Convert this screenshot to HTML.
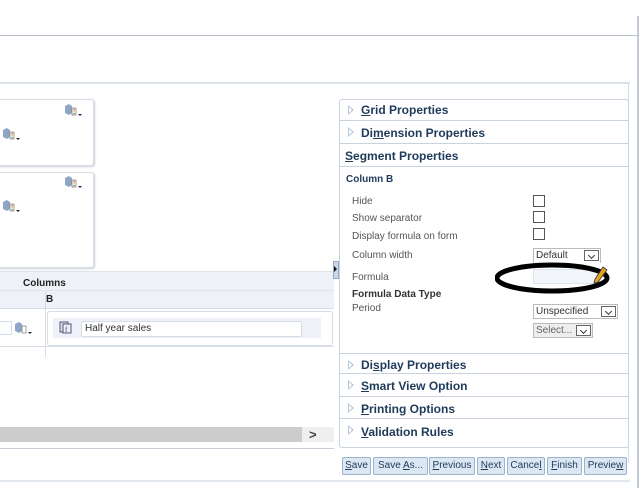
<!DOCTYPE html>
<html><head><style>
*{margin:0;padding:0;box-sizing:border-box}
body{width:640px;height:488px;background:#fff;position:relative;overflow:hidden;font-family:"Liberation Sans",Arial,sans-serif;font-size:10px;color:#333}
.a{position:absolute}
.hd{font-weight:bold;color:#1f3a5a;font-size:12px}
.row{position:absolute;left:340px;width:288px;border-bottom:1px solid #c9d3de}
.tri{position:absolute;left:8px;top:6px;width:0;height:0;border-left:6px solid #b8c8dc;border-top:5px solid transparent;border-bottom:5px solid transparent}
.tri:after{content:"";position:absolute;left:-5px;top:-3px;border-left:3px solid #fff;border-top:3px solid transparent;border-bottom:3px solid transparent}
.cb{position:absolute;left:533px;width:12px;height:12px;border:1px solid #555;background:#fff}
.lbl{position:absolute;left:352px;color:#555;font-size:10px}
.sel{position:absolute;border:1px solid #bbb;background:#fff;font-size:10px;color:#333;padding:1px 2px;height:15px}
.dd{position:absolute;right:1px;top:1px;width:15px;height:11px;border:1px solid #666;background:#fff}
.dd:after{content:"";position:absolute;left:4px;top:2px;width:4px;height:4px;border-right:1px solid #333;border-bottom:1px solid #333;transform:rotate(45deg)}
.btn{position:absolute;top:457px;height:18px;border:1px solid #9bb3cc;background:#dbe7f3;border-radius:2px;font-size:10px;color:#1f3a5a;text-align:center;line-height:16px}
.box{position:absolute;left:-4px;width:98px;background:#fff;border:1px solid #d6dde5;border-radius:3px;box-shadow:1px 1px 2px #ccd}
</style></head><body>
<div class="a" style="left:0;top:35px;width:638px;height:1px;background:#b8c2cc"></div>
<div class="a" style="left:637px;top:16px;width:2px;height:472px;background:#c3ccd6"></div>
<div class="a" style="left:0;top:82px;width:630px;height:2px;background:#dde3ea"></div>
<div class="a" style="left:628px;top:83px;width:1px;height:380px;background:#d6dde5"></div>

<div class="box" style="top:99px;height:67px"></div>
<div class="box" style="top:172px;height:96px"></div>
<svg class="a" style="left:64px;top:104px" width="20" height="14"><path d="M1 2l4-2 3 2v7l-3 2-4-2z" fill="#8ea6c6"/><rect x="8" y="4" width="4" height="7" fill="#fff" stroke="#777" stroke-width=".7"/><rect x="9.5" y="5" width="1.3" height="1.3" fill="#d33"/><rect x="9.5" y="7" width="1.3" height="1.3" fill="#eb0"/><rect x="9.5" y="9" width="1.3" height="1.3" fill="#2a2"/><path d="M14 10h4l-2 2z" fill="#223"/></svg>
<svg class="a" style="left:2px;top:128px" width="20" height="14"><path d="M1 2l4-2 3 2v7l-3 2-4-2z" fill="#8ea6c6"/><rect x="8" y="4" width="4" height="7" fill="#fff" stroke="#777" stroke-width=".7"/><rect x="9.5" y="5" width="1.3" height="1.3" fill="#d33"/><rect x="9.5" y="7" width="1.3" height="1.3" fill="#eb0"/><rect x="9.5" y="9" width="1.3" height="1.3" fill="#2a2"/><path d="M14 10h4l-2 2z" fill="#223"/></svg>
<svg class="a" style="left:64px;top:176px" width="20" height="14"><path d="M1 2l4-2 3 2v7l-3 2-4-2z" fill="#8ea6c6"/><rect x="8" y="4" width="4" height="7" fill="#fff" stroke="#777" stroke-width=".7"/><rect x="9.5" y="5" width="1.3" height="1.3" fill="#d33"/><rect x="9.5" y="7" width="1.3" height="1.3" fill="#eb0"/><rect x="9.5" y="9" width="1.3" height="1.3" fill="#2a2"/><path d="M14 10h4l-2 2z" fill="#223"/></svg>
<svg class="a" style="left:2px;top:200px" width="20" height="14"><path d="M1 2l4-2 3 2v7l-3 2-4-2z" fill="#8ea6c6"/><rect x="8" y="4" width="4" height="7" fill="#fff" stroke="#777" stroke-width=".7"/><rect x="9.5" y="5" width="1.3" height="1.3" fill="#d33"/><rect x="9.5" y="7" width="1.3" height="1.3" fill="#eb0"/><rect x="9.5" y="9" width="1.3" height="1.3" fill="#2a2"/><path d="M14 10h4l-2 2z" fill="#223"/></svg>

<div class="a" style="left:0;top:271px;width:334px;height:20px;background:#eef2f8;border-top:1px solid #dde4ec;border-bottom:1px solid #dde4ec"></div>
<div class="a" style="left:23px;top:278px;font-weight:bold;font-size:10px;color:#222">Columns</div>
<div class="a" style="left:0;top:291px;width:334px;height:18px;background:#eef2f8;border-bottom:1px solid #d6dde5"></div>
<div class="a" style="left:46px;top:294px;font-weight:bold;font-size:10px;color:#222">B</div>
<div class="a" style="left:45px;top:291px;width:1px;height:66px;background:#d6dde5"></div>
<div class="a" style="left:0;top:310px;width:334px;height:37px;border-bottom:1px solid #d6dde5"></div>
<div class="a" style="left:0;top:321px;width:12px;height:14px;border:1px solid #d6dde5;border-left:0;background:#fff"></div>
<svg class="a" style="left:14px;top:322px" width="20" height="14"><path d="M1 2l4-2 3 2v7l-3 2-4-2z" fill="#8ea6c6"/><rect x="8" y="4" width="4" height="7" fill="#fff" stroke="#777" stroke-width=".7"/><path d="M14 10h4l-2 2z" fill="#223"/></svg>
<div class="a" style="left:47px;top:311px;width:286px;height:35px;border:1px solid #d6dde5;border-radius:3px"></div>
<div class="a" style="left:53px;top:318px;width:268px;height:20px;background:#eef2f8"></div>
<svg class="a" style="left:59px;top:321px" width="14" height="13"><rect x="1" y="1" width="8" height="10" fill="#dde" stroke="#557"/><rect x="4" y="3" width="8" height="9" fill="#eef" stroke="#557"/><text x="6" y="11" font-size="7" fill="#335" font-family="Liberation Serif">f</text></svg>
<div class="a" style="left:81px;top:321px;width:221px;height:16px;background:#fff;border:1px solid #d6dde5;border-radius:2px;padding-left:3px;font-size:10px;line-height:14px;color:#333">Half year sales</div>

<div class="a" style="left:0;top:427px;width:302px;height:15px;background:#cccccc"></div>
<div class="a" style="left:302px;top:427px;width:32px;height:15px;background:#efefef;font-size:13px;font-weight:bold;color:#444;padding-left:7px;line-height:15px">&gt;</div>
<div class="a" style="left:0;top:448px;width:334px;height:1px;background:#c6ced8"></div>
<div class="a" style="left:0;top:480px;width:630px;height:2px;background:#e3e8ee"></div>

<div class="a" style="left:333px;top:261px;width:6px;height:18px;background:#c8d8ec;border:1px solid #9ab"></div>
<div class="a" style="left:334px;top:266px;border-left:3px solid #111;border-top:3px solid transparent;border-bottom:3px solid transparent"></div>

<div class="a" style="left:339px;top:99px;width:290px;height:349px;border:1px solid #c9d3de;border-radius:3px"></div>
<div class="row" style="top:99px;height:22px"><div class="tri"></div><div class="a hd" style="left:21px;top:4px"><u>G</u>rid Properties</div></div>
<div class="row" style="top:121px;height:23px"><div class="tri"></div><div class="a hd" style="left:21px;top:5px">Di<u>m</u>ension Properties</div></div>
<div class="row" style="top:144px;height:23px"><div class="a hd" style="left:5px;top:5px"><u>S</u>egment Properties</div></div>
<div class="a hd" style="left:346px;top:174px;font-size:10px">Column B</div>
<div class="lbl" style="top:196px">Hide</div>
<div class="lbl" style="top:213px">Show separator</div>
<div class="lbl" style="top:231px">Display formula on form</div>
<div class="lbl" style="top:250px">Column width</div>
<div class="lbl" style="top:272px">Formula</div>
<div class="lbl" style="top:289px;font-weight:bold;color:#333">Formula Data Type</div>
<div class="lbl" style="top:303px">Period</div>
<div class="cb" style="top:195px"></div>
<div class="cb" style="top:211px"></div>
<div class="cb" style="top:228px"></div>
<div class="sel" style="left:533px;top:248px;width:68px;border-bottom:none">Default<div class="dd"></div></div>
<div class="a" style="left:533px;top:269px;width:67px;height:15px;background:#f2f6fb;border:1px solid #dde4ec"></div>
<svg class="a" style="left:495px;top:262px" width="120" height="34"><ellipse cx="57" cy="16" rx="55" ry="13" fill="none" stroke="#000" stroke-width="5"/><path d="M108 5l4 3-9 12-4 1 1-4z" fill="#e8a020" stroke="#333" stroke-width=".8"/></svg>
<div class="sel" style="left:533px;top:304px;width:85px">Unspecified<div class="dd"></div></div>
<div class="sel" style="left:533px;top:323px;width:60px;background:#eee;color:#666">Select...<div class="dd"></div></div>
<div class="row" style="top:353px;height:21px;border-top:1px solid #c9d3de"><div class="tri"></div><div class="a hd" style="left:21px;top:4px">Di<u>s</u>play Properties</div></div>
<div class="row" style="top:374px;height:23px"><div class="tri"></div><div class="a hd" style="left:21px;top:5px"><u>S</u>mart View Option</div></div>
<div class="row" style="top:397px;height:22px"><div class="tri"></div><div class="a hd" style="left:21px;top:5px"><u>P</u>rinting Options</div></div>
<div class="row" style="top:419px;height:23px;border-bottom:none"><div class="tri"></div><div class="a hd" style="left:21px;top:6px"><u>V</u>alidation Rules</div></div>

<div class="btn" style="left:342px;width:29px"><u>S</u>ave</div>
<div class="btn" style="left:373px;width:55px">Save <u>A</u>s...</div>
<div class="btn" style="left:429px;width:46px"><u>P</u>revious</div>
<div class="btn" style="left:477px;width:28px"><u>N</u>ext</div>
<div class="btn" style="left:507px;width:38px">Cance<u>l</u></div>
<div class="btn" style="left:547px;width:35px"><u>F</u>inish</div>
<div class="btn" style="left:584px;width:43px">Previe<u>w</u></div>
</body></html>
